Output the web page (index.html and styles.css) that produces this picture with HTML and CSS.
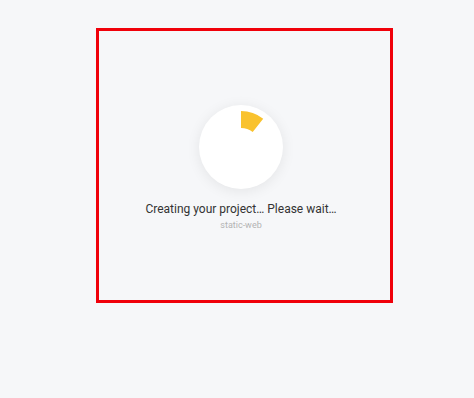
FILE: index.html
```html
<!DOCTYPE html>
<html>
<head>
<meta charset="utf-8">
<link rel="stylesheet" href="styles.css">
</head>
<body>
<div class="page">
  <div class="frame">
    <div class="loader">
      <div class="spinner">
        <svg width="84" height="84" viewBox="0 0 84 84">
          <path class="wedge" d="M42 6 A36 36 0 0 1 64.2 13.7 L53.7 27 A19 19 0 0 0 42 23 Z"/>
        </svg>
      </div>
      <div class="title">Creating your project… Please wait…</div>
      <div class="sub">static-web</div>
    </div>
  </div>
</div>
</body>
</html>
```
FILE: styles.css
```css
html, body {
  margin: 0;
  padding: 0;
  background: #f6f7f9;
}
.page {
  width: 474px;
  height: 398px;
  box-sizing: border-box;
  padding: 28px 0 0 96px;
  font-family: Roboto, "Liberation Sans", sans-serif;
}
.frame {
  width: 297px;
  height: 275px;
  box-sizing: border-box;
  border: 3px solid #f0000a;
  display: flex;
  flex-direction: column;
  padding: 74px 7px 0 0;
}
.loader {
  display: flex;
  flex-direction: column;
  align-items: center;
}
.spinner {
  width: 84px;
  height: 84px;
  border-radius: 50%;
  background: #fff;
  box-shadow: 0 2px 14px rgba(0, 0, 0, 0.08);
}
.spinner svg {
  display: block;
}
.wedge {
  fill: #f9c22e;
}
.title {
  margin-top: 13px;
  font-size: 12px;
  line-height: 15px;
  color: #333;
}
.sub {
  margin-top: 2px;
  font-size: 9px;
  line-height: 12px;
  color: #b3b3b3;
}
```
